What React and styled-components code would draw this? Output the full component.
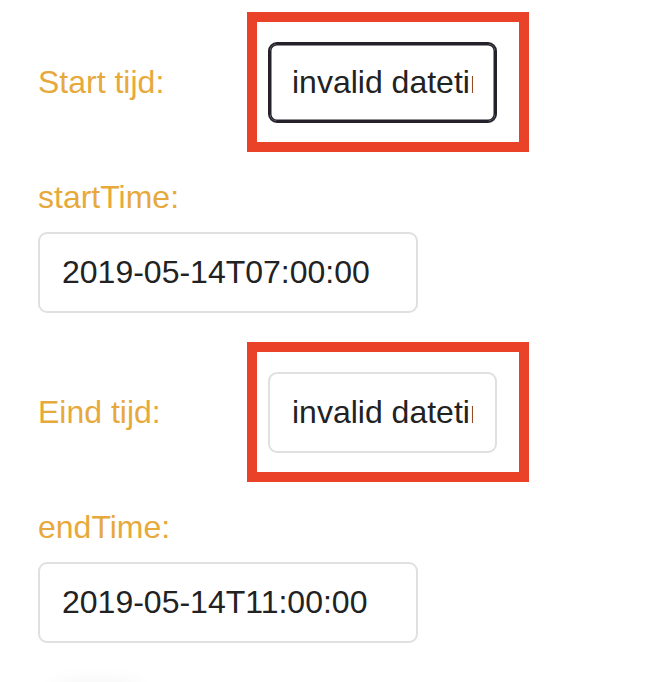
import React from "react";
import styled, { createGlobalStyle, css } from "styled-components";

const GlobalStyle = createGlobalStyle`
  html, body {
    margin: 0;
    padding: 0;
    background: #ffffff;
    font-family: "Liberation Sans", Arial, Helvetica, sans-serif;
  }
`;

const Page = styled.div`
  padding: 12px 0 0 38px;
  display: flex;
  flex-direction: column;
`;

const Section = styled.section`
  display: flex;
  flex-direction: column;
  align-items: flex-start;
  & + & {
    margin-top: 29px;
  }
`;

const Row = styled.div`
  display: grid;
  grid-template-columns: 209px auto;
  align-items: center;
`;

const Label = styled.label`
  font-size: 32px;
  line-height: 37px;
  color: #e7a93b;
`;

const RawLabel = styled(Label)`
  margin: 27px 0 16px;
`;

const Highlight = styled.div`
  border: 10px solid #ea4129;
  padding: 20px 22px 19px 11px;
  background: #fff;
`;

const Input = styled.input`
  box-sizing: border-box;
  height: 81px;
  width: ${(p) => p.$width}px;
  padding: 0 22px;
  border: 2px solid #e0e0e0;
  border-radius: 9px;
  background: #fff;
  font-family: "Liberation Sans", Arial, Helvetica, sans-serif;
  font-size: 32px;
  color: #222222;
  outline: none;
  ${(p) =>
    p.$active &&
    css`
      border-color: #24212b;
      box-shadow: inset 0 0 0 1.5px #24212b;
    `}
`;

const SubmitButton = styled.button`
  margin-top: 44px;
  margin-left: 14px;
  width: 90px;
  height: 44px;
  border: none;
  border-radius: 22px;
  background: #fff;
  box-shadow: 0 0 22px 4px rgba(0, 0, 0, 0.05);
`;

const fields = [
  { label: "Start tijd:", raw: "startTime:", value: "2019-05-14T07:00:00", active: true },
  { label: "Eind tijd:", raw: "endTime:", value: "2019-05-14T11:00:00", active: false },
];

export default function App() {
  return (
    <>
      <GlobalStyle />
      <Page>
        {fields.map((f) => (
          <Section key={f.raw}>
            <Row>
              <Label>{f.label}</Label>
              <Highlight>
                <Input $width={229} $active={f.active} value="invalid datetime" readOnly />
              </Highlight>
            </Row>
            <RawLabel>{f.raw}</RawLabel>
            <Input $width={380} value={f.value} readOnly />
          </Section>
        ))}
        <SubmitButton aria-label="submit" />
      </Page>
    </>
  );
}
